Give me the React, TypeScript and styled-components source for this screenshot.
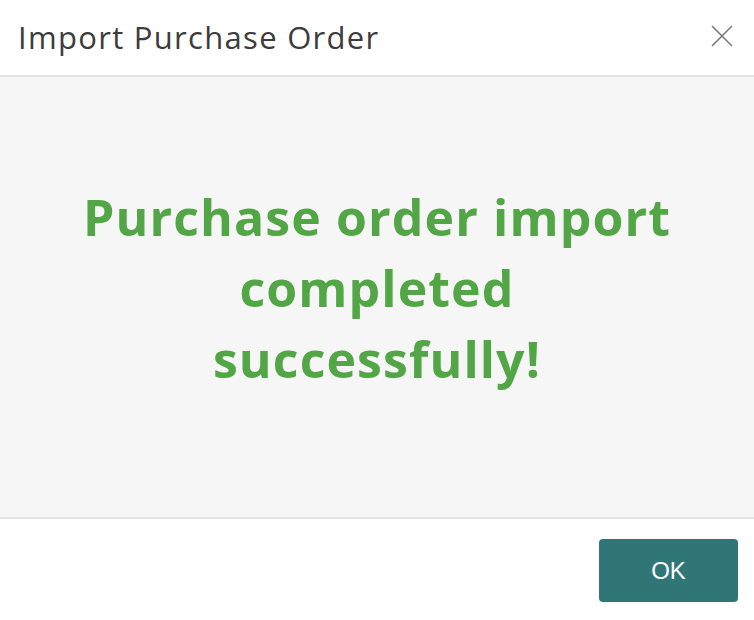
import React from "react"
import styled, { createGlobalStyle } from "styled-components"

const GlobalStyle = createGlobalStyle`
  html, body {
    margin: 0;
    padding: 0;
    background: #ffffff;
  }
  body {
    font-family: "Open Sans", "Noto Sans", "Liberation Sans", sans-serif;
  }
`

const CloseIcon = () => (
  <svg width="22" height="22" viewBox="0 0 22 22" fill="none">
    <path d="M1 1L21 21M21 1L1 21" stroke="#7a7a7a" strokeWidth="1.6" />
  </svg>
)

export default function App() {
  return (
    <>
      <GlobalStyle />
      <S.Dialog>
        <S.Header>
          <S.Title>Import Purchase Order</S.Title>
          <S.Close aria-label="Close">
            <CloseIcon />
          </S.Close>
        </S.Header>
        <S.Body>
          <S.Message>
            Purchase order import
            <br />
            completed
            <br />
            successfully!
          </S.Message>
        </S.Body>
        <S.Footer>
          <S.OkButton>OK</S.OkButton>
        </S.Footer>
      </S.Dialog>
    </>
  )
}

const S = {
  Dialog: styled.div`
    width: 754px;
    height: 620px;
    display: flex;
    flex-direction: column;
    background: #ffffff;
  `,
  Header: styled.div`
    height: 77px;
    box-sizing: border-box;
    display: flex;
    align-items: center;
    justify-content: space-between;
    padding: 0 21px 0 18px;
    border-bottom: 2px solid #e4e4e4;
  `,
  Title: styled.h2`
    margin: 0 0 2px;
    font-size: 31px;
    letter-spacing: 1.3px;
    font-weight: 400;
    color: #3c3c3c;
  `,
  Close: styled.button`
    border: 0;
    background: none;
    padding: 0;
    margin-bottom: 4px;
    display: flex;
    cursor: pointer;
  `,
  Body: styled.div`
    height: 442px;
    background: #f6f6f6;
    display: flex;
    align-items: center;
    justify-content: center;
    border-bottom: 2px solid #e4e4e4;
    box-sizing: border-box;
  `,
  Message: styled.p`
    margin: 0 0 18px;
    text-align: center;
    font-size: 50px;
    letter-spacing: 1.1px;
    line-height: 71px;
    font-weight: 700;
    color: #52a646;
  `,
  Footer: styled.div`
    flex: 1;
    display: flex;
    justify-content: flex-end;
    align-items: flex-start;
    padding: 20px 16px 0 0;
  `,
  OkButton: styled.button`
    width: 139px;
    height: 63px;
    border: 0;
    border-radius: 4px;
    background: #317677;
    color: #ffffff;
    font-family: "Liberation Sans", Arial, sans-serif;
    font-size: 24px;
    cursor: pointer;
  `,
}
